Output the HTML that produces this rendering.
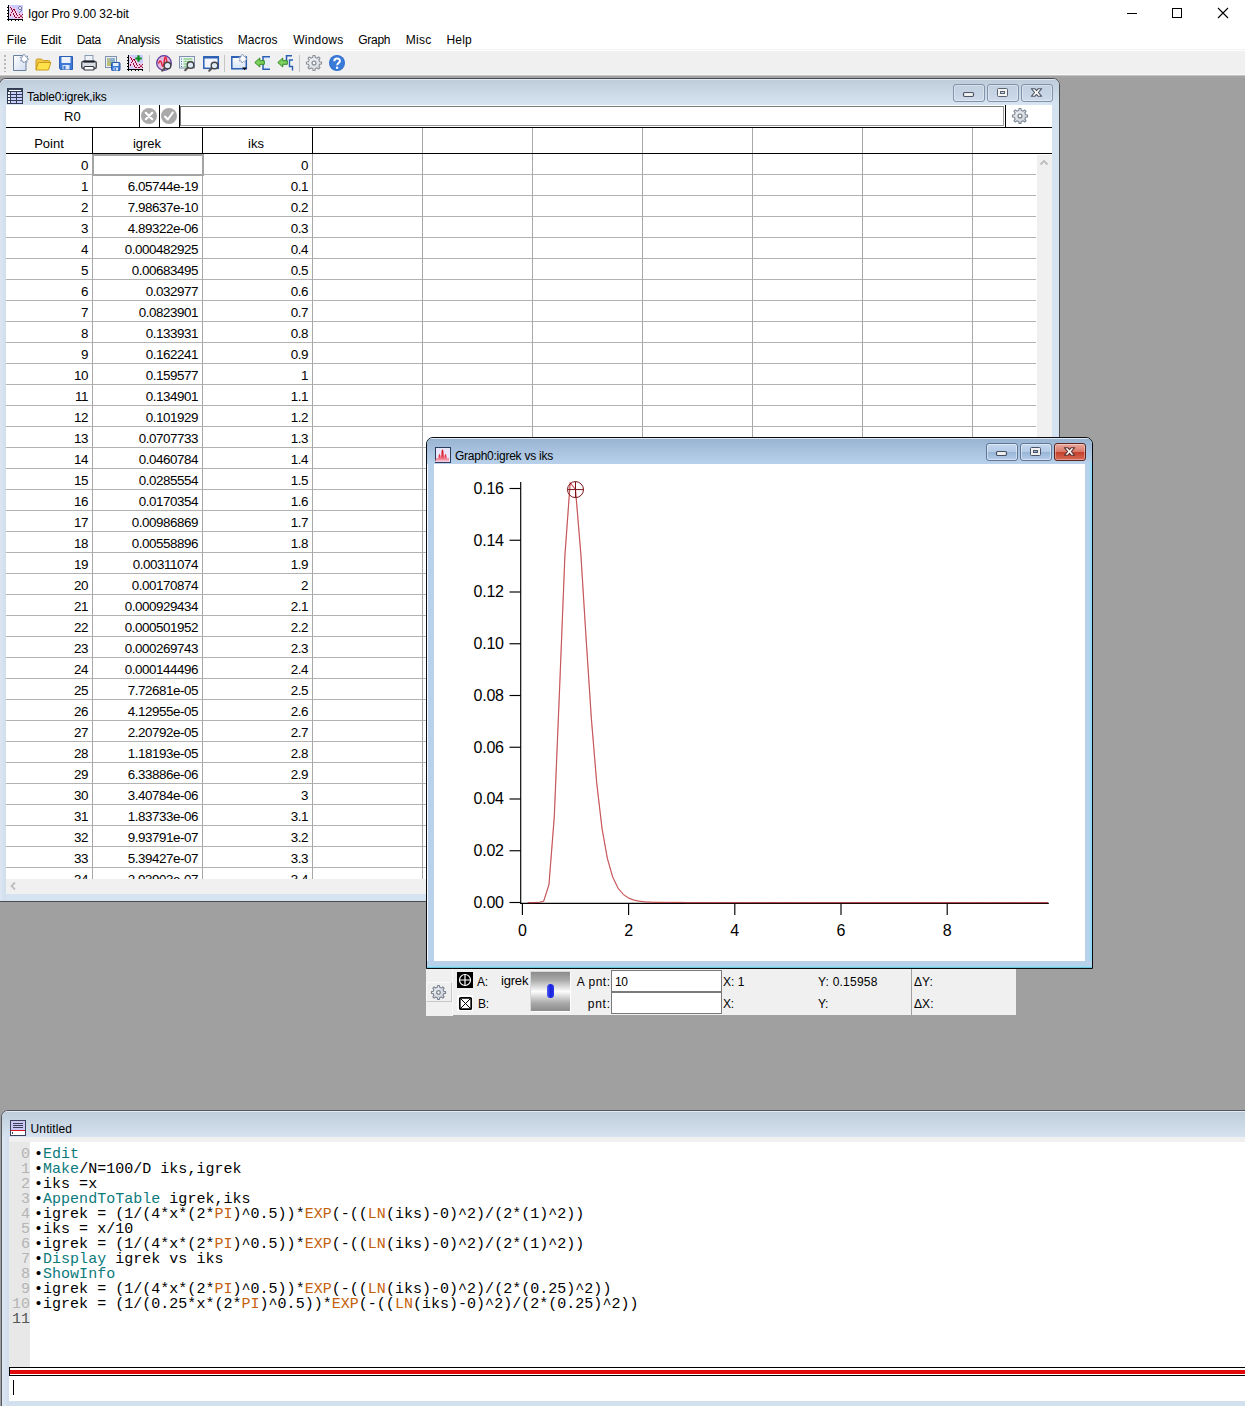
<!DOCTYPE html>
<html><head><meta charset="utf-8"><title>Igor Pro 9.00 32-bit</title>
<style>
*{box-sizing:border-box;margin:0;padding:0}
html,body{width:1245px;height:1406px;overflow:hidden}
body{position:relative;background:#a0a0a0;font-family:"Liberation Sans",sans-serif;color:#000}
.abs{position:absolute}
.t{position:absolute;white-space:nowrap;line-height:1}
.ui{font-size:12px}
svg{position:absolute;overflow:visible}
.mono{font-family:"Liberation Mono",monospace}

.c0,.c1{font-size:13.400px;text-align:right;letter-spacing:-0.44px}
.ip{font-size:12px;letter-spacing:-0.3px}
.ln,.cl{font-size:15px}
.mn{letter-spacing:-0.35px}
</style></head><body>

<div class="abs" style="left:0;top:0;width:1245px;height:51px;background:#fff"></div>
<div class="abs" style="left:0;top:49px;width:1245px;height:1px;background:#f2f2f2"></div>
<div class="abs" style="left:0;top:51px;width:1245px;height:24px;background:#f0f0f0"></div>
<div class="abs" style="left:0;top:74px;width:1245px;height:1px;background:#f8f8f8"></div>
<div class="abs" style="left:0;top:75px;width:1245px;height:3px;background:linear-gradient(#c4c4c4 0,#c4c4c4 1px,#a3a3a3 1px)"></div>
<svg style="left:7px;top:5px" width="16" height="16" ><g shape-rendering="crispEdges"><rect x="2" y="0" width="14" height="14" fill="#ccccff"/><rect x="2" y="1" width="3" height="3" fill="#ffcce8" opacity=".55"/><rect x="3" y="2" width="3" height="3" fill="#ffcce8" opacity=".55"/><rect x="3" y="3" width="3" height="3" fill="#ffcce8" opacity=".55"/><rect x="4" y="4" width="3" height="3" fill="#ffcce8" opacity=".55"/><rect x="4" y="5" width="3" height="3" fill="#ffcce8" opacity=".55"/><rect x="3" y="6" width="3" height="3" fill="#ffcce8" opacity=".55"/><rect x="2" y="8" width="3" height="3" fill="#ffcce8" opacity=".55"/><rect x="2" y="9" width="3" height="3" fill="#ffcce8" opacity=".55"/><rect x="5" y="3" width="3" height="3" fill="#ffcce8" opacity=".55"/><rect x="6" y="3" width="3" height="3" fill="#ffcce8" opacity=".55"/><rect x="6" y="4" width="3" height="3" fill="#ffcce8" opacity=".55"/><rect x="7" y="5" width="3" height="3" fill="#ffcce8" opacity=".55"/><rect x="7" y="6" width="3" height="3" fill="#ffcce8" opacity=".55"/><rect x="8" y="7" width="3" height="3" fill="#ffcce8" opacity=".55"/><rect x="8" y="8" width="3" height="3" fill="#ffcce8" opacity=".55"/><rect x="5" y="7" width="3" height="3" fill="#ffcce8" opacity=".55"/><rect x="5" y="8" width="3" height="3" fill="#ffcce8" opacity=".55"/><rect x="6" y="9" width="3" height="3" fill="#ffcce8" opacity=".55"/><rect x="6" y="10" width="3" height="3" fill="#ffcce8" opacity=".55"/><rect x="7" y="11" width="3" height="3" fill="#ffcce8" opacity=".55"/><rect x="8" y="11" width="3" height="3" fill="#ffcce8" opacity=".55"/><rect x="9" y="9" width="3" height="3" fill="#ffcce8" opacity=".55"/><rect x="10" y="11" width="3" height="3" fill="#ffcce8" opacity=".55"/><rect x="11" y="11" width="3" height="3" fill="#ffcce8" opacity=".55"/><rect x="11" y="8" width="3" height="3" fill="#ffcce8" opacity=".55"/><rect x="14" y="8" width="2" height="3" fill="#ffcce8" opacity=".55"/><rect x="14" y="11" width="2" height="3" fill="#ffcce8" opacity=".55"/><rect x="12" y="10" width="3" height="3" fill="#ffcce8" opacity=".55"/><rect x="13" y="10" width="3" height="3" fill="#ffcce8" opacity=".55"/><rect x="3" y="2" width="1" height="1" fill="#8c0a36"/><rect x="4" y="3" width="1" height="1" fill="#8c0a36"/><rect x="4" y="4" width="1" height="1" fill="#8c0a36"/><rect x="5" y="5" width="1" height="1" fill="#8c0a36"/><rect x="5" y="6" width="1" height="1" fill="#8c0a36"/><rect x="4" y="7" width="1" height="1" fill="#8c0a36"/><rect x="3" y="9" width="1" height="1" fill="#8c0a36"/><rect x="3" y="10" width="1" height="1" fill="#8c0a36"/><rect x="6" y="4" width="1" height="1" fill="#8c0a36"/><rect x="7" y="4" width="1" height="1" fill="#8c0a36"/><rect x="7" y="5" width="1" height="1" fill="#8c0a36"/><rect x="8" y="6" width="1" height="1" fill="#8c0a36"/><rect x="8" y="7" width="1" height="1" fill="#8c0a36"/><rect x="9" y="8" width="1" height="1" fill="#8c0a36"/><rect x="9" y="9" width="1" height="1" fill="#8c0a36"/><rect x="6" y="8" width="1" height="1" fill="#8c0a36"/><rect x="6" y="9" width="1" height="1" fill="#8c0a36"/><rect x="7" y="10" width="1" height="1" fill="#8c0a36"/><rect x="7" y="11" width="1" height="1" fill="#8c0a36"/><rect x="8" y="12" width="1" height="1" fill="#8c0a36"/><rect x="9" y="12" width="1" height="1" fill="#8c0a36"/><rect x="10" y="10" width="1" height="1" fill="#8c0a36"/><rect x="11" y="12" width="1" height="1" fill="#8c0a36"/><rect x="12" y="12" width="1" height="1" fill="#8c0a36"/><rect x="12" y="9" width="1" height="1" fill="#8c0a36"/><rect x="15" y="9" width="1" height="1" fill="#8c0a36"/><rect x="15" y="12" width="1" height="1" fill="#8c0a36"/><rect x="13" y="10.400" width="2" height="1.400" fill="#98001c" shape-rendering="auto"/><rect x="12" y="2" width="2" height="2" fill="#e4e4fa"/><rect x="12" y="1" width="1" height="1" fill="#7c7ea2"/><rect x="13" y="1" width="1" height="1" fill="#7c7ea2"/><rect x="11" y="2" width="1" height="1" fill="#7c7ea2"/><rect x="11" y="3" width="1" height="1" fill="#7c7ea2"/><rect x="14" y="2" width="1" height="1" fill="#7c7ea2"/><rect x="14" y="3" width="1" height="1" fill="#7c7ea2"/><rect x="14" y="4" width="1" height="1" fill="#7c7ea2"/><rect x="14" y="5" width="1" height="1" fill="#7c7ea2"/><rect x="12" y="4" width="1" height="1" fill="#7c7ea2"/><rect x="13" y="4" width="1" height="1" fill="#7c7ea2"/><rect x="13" y="6" width="1" height="1" fill="#7c7ea2"/><rect x="12" y="7" width="1" height="1" fill="#7c7ea2"/><rect x="1" y="0" width="1" height="16" fill="#000"/><rect x="1" y="14" width="15" height="1" fill="#000"/><rect x="0" y="2" width="1" height="1" fill="#000"/><rect x="0" y="5" width="1" height="1" fill="#000"/><rect x="0" y="8" width="1" height="1" fill="#000"/><rect x="0" y="11" width="1" height="1" fill="#000"/><rect x="0" y="14" width="1" height="1" fill="#000"/><rect x="1" y="15" width="1" height="1" fill="#000"/><rect x="4" y="15" width="1" height="1" fill="#000"/><rect x="8" y="15" width="1" height="1" fill="#000"/><rect x="11" y="15" width="1" height="1" fill="#000"/><rect x="15" y="15" width="1" height="1" fill="#000"/></g></svg>
<div class="t" id="ttl" style="left:28px;top:8px;font-size:12px;letter-spacing:-0.1px">Igor Pro 9.00 32-bit</div>
<svg style="left:1120px;top:0" width="125" height="30" shape-rendering="crispEdges"><path d="M7 13.5h10" stroke="#000" fill="none"/><rect x="52.5" y="8.5" width="9" height="9" stroke="#000" fill="none"/><path d="M98 8l10 10M108 8l-10 10" stroke="#000" fill="none" shape-rendering="auto" stroke-width="1.1"/></svg>
<div class="t" id="mn0" style="left:6.8px;top:34px;font-size:12px;letter-spacing:0.1px">File</div>
<div class="t" id="mn1" style="left:40.8px;top:34px;font-size:12px;letter-spacing:-0.05px">Edit</div>
<div class="t" id="mn2" style="left:76.8px;top:34px;font-size:12px;letter-spacing:-0.35px">Data</div>
<div class="t" id="mn3" style="left:117.3px;top:34px;font-size:12px;letter-spacing:-0.3px">Analysis</div>
<div class="t" id="mn4" style="left:175.5px;top:34px;font-size:12px;letter-spacing:-0.05px">Statistics</div>
<div class="t" id="mn5" style="left:237.7px;top:34px;font-size:12px;letter-spacing:0.1px">Macros</div>
<div class="t" id="mn6" style="left:293.3px;top:34px;font-size:12px;letter-spacing:0.2px">Windows</div>
<div class="t" id="mn7" style="left:358.3px;top:34px;font-size:12px;letter-spacing:-0.3px">Graph</div>
<div class="t" id="mn8" style="left:405.8px;top:34px;font-size:12px;letter-spacing:0.3px">Misc</div>
<div class="t" id="mn9" style="left:446.5px;top:34px;font-size:12px;letter-spacing:0.15px">Help</div>
<div class="abs" style="left:4px;top:55px;width:2px;height:17px;background:repeating-linear-gradient(180deg,#b8b8b8 0,#b8b8b8 2px,transparent 2px,transparent 4px)"></div>
<svg style="left:13px;top:55px" width="16" height="16" ><path d="M.5.500h9.500l3 3v12h-12.500z" fill="url(#pg)" stroke="#6a7f9c"/><defs><linearGradient id="pg" x1="0" y1="0" x2="1" y2="1"><stop offset="0" stop-color="#fff"/><stop offset="1" stop-color="#cfdcf0"/></linearGradient></defs><path d="M11.500 -.500l1 2 2.200-.5-.8 2 1.800 1.300-2 .9.300 2.200-2-1-1.500 1.600-.8-2.100-2.200.100 1.200-1.900-1.400-1.700 2.200-.300.300-2.200z" fill="#fff" stroke="#7c8fae" stroke-width=".9"/></svg>
<svg style="left:35px;top:55px" width="16" height="16" ><path d="M1 15V5.500q0-1.500 1.500-1.500h4l1.500 1.500h5.500q1.500 0 1.500 1.500v1" fill="#f2c84a" stroke="#c9991e"/><path d="M1 15l2.300-7.500h12.500l-2.300 7.500z" fill="#ffe14a" stroke="#c9991e" stroke-linejoin="round"/></svg>
<svg style="left:58px;top:55px" width="16" height="16" ><path d="M1.500 1.500h13v13h-12l-1-1z" fill="#3b78d8" stroke="#2d5fb3" stroke-linejoin="round"/><rect x="3.500" y="2" width="9" height="6" fill="#eef3fb"/><rect x="4.500" y="10" width="7" height="4.500" fill="#dbe6f6"/><rect x="5.500" y="11" width="2" height="3.500" fill="#3b78d8"/></svg>
<svg style="left:81px;top:55px" width="16" height="16" ><rect x="4" y=".5" width="8" height="6" fill="#eef3fa" stroke="#8a9bb4"/><rect x=".7" y="6.500" width="14.600" height="7" rx="1.500" fill="#d9dde4" stroke="#4b4f58" stroke-width="1.400"/><rect x="2.500" y="5.500" width="11" height="2" fill="#1b1d22"/><rect x="3" y="11.500" width="10" height="3.500" rx="1" fill="#fff" stroke="#33363d" stroke-width="1.200"/></svg>
<svg style="left:105px;top:55px" width="16" height="16" ><rect x=".5" y="1.500" width="11" height="11" fill="#e9eef6" stroke="#7e92b0"/><rect x="2" y="3" width="8" height="8" fill="#8fb0c9"/><rect x="2" y="7" width="8" height="4" fill="#9fb86a"/><rect x="2" y="3" width="3" height="8" fill="#c9c27a" opacity=".7"/><rect x="6.500" y="7.500" width="8.500" height="8" rx="1" fill="#3b78d8" stroke="#2a57a8"/><rect x="8" y="8" width="5.500" height="3" fill="#e6eefa"/><rect x="8.500" y="12.500" width="4.500" height="3" fill="#dbe6f6"/><rect x="9.500" y="13" width="1.500" height="2.500" fill="#3b78d8"/></svg>
<svg style="left:127px;top:55px" width="16" height="16" ><g shape-rendering="crispEdges"><rect x="2" y="0" width="14" height="14" fill="#ccccff"/><rect x="2" y="1" width="3" height="3" fill="#ffcce8" opacity=".55"/><rect x="3" y="2" width="3" height="3" fill="#ffcce8" opacity=".55"/><rect x="3" y="3" width="3" height="3" fill="#ffcce8" opacity=".55"/><rect x="4" y="4" width="3" height="3" fill="#ffcce8" opacity=".55"/><rect x="4" y="5" width="3" height="3" fill="#ffcce8" opacity=".55"/><rect x="3" y="6" width="3" height="3" fill="#ffcce8" opacity=".55"/><rect x="2" y="8" width="3" height="3" fill="#ffcce8" opacity=".55"/><rect x="2" y="9" width="3" height="3" fill="#ffcce8" opacity=".55"/><rect x="5" y="3" width="3" height="3" fill="#ffcce8" opacity=".55"/><rect x="6" y="3" width="3" height="3" fill="#ffcce8" opacity=".55"/><rect x="6" y="4" width="3" height="3" fill="#ffcce8" opacity=".55"/><rect x="7" y="5" width="3" height="3" fill="#ffcce8" opacity=".55"/><rect x="7" y="6" width="3" height="3" fill="#ffcce8" opacity=".55"/><rect x="8" y="7" width="3" height="3" fill="#ffcce8" opacity=".55"/><rect x="8" y="8" width="3" height="3" fill="#ffcce8" opacity=".55"/><rect x="5" y="7" width="3" height="3" fill="#ffcce8" opacity=".55"/><rect x="5" y="8" width="3" height="3" fill="#ffcce8" opacity=".55"/><rect x="6" y="9" width="3" height="3" fill="#ffcce8" opacity=".55"/><rect x="6" y="10" width="3" height="3" fill="#ffcce8" opacity=".55"/><rect x="7" y="11" width="3" height="3" fill="#ffcce8" opacity=".55"/><rect x="8" y="11" width="3" height="3" fill="#ffcce8" opacity=".55"/><rect x="9" y="9" width="3" height="3" fill="#ffcce8" opacity=".55"/><rect x="10" y="11" width="3" height="3" fill="#ffcce8" opacity=".55"/><rect x="11" y="11" width="3" height="3" fill="#ffcce8" opacity=".55"/><rect x="11" y="8" width="3" height="3" fill="#ffcce8" opacity=".55"/><rect x="14" y="8" width="2" height="3" fill="#ffcce8" opacity=".55"/><rect x="14" y="11" width="2" height="3" fill="#ffcce8" opacity=".55"/><rect x="12" y="10" width="3" height="3" fill="#ffcce8" opacity=".55"/><rect x="13" y="10" width="3" height="3" fill="#ffcce8" opacity=".55"/><rect x="3" y="2" width="1" height="1" fill="#8c0a36"/><rect x="4" y="3" width="1" height="1" fill="#8c0a36"/><rect x="4" y="4" width="1" height="1" fill="#8c0a36"/><rect x="5" y="5" width="1" height="1" fill="#8c0a36"/><rect x="5" y="6" width="1" height="1" fill="#8c0a36"/><rect x="4" y="7" width="1" height="1" fill="#8c0a36"/><rect x="3" y="9" width="1" height="1" fill="#8c0a36"/><rect x="3" y="10" width="1" height="1" fill="#8c0a36"/><rect x="6" y="4" width="1" height="1" fill="#8c0a36"/><rect x="7" y="4" width="1" height="1" fill="#8c0a36"/><rect x="7" y="5" width="1" height="1" fill="#8c0a36"/><rect x="8" y="6" width="1" height="1" fill="#8c0a36"/><rect x="8" y="7" width="1" height="1" fill="#8c0a36"/><rect x="9" y="8" width="1" height="1" fill="#8c0a36"/><rect x="9" y="9" width="1" height="1" fill="#8c0a36"/><rect x="6" y="8" width="1" height="1" fill="#8c0a36"/><rect x="6" y="9" width="1" height="1" fill="#8c0a36"/><rect x="7" y="10" width="1" height="1" fill="#8c0a36"/><rect x="7" y="11" width="1" height="1" fill="#8c0a36"/><rect x="8" y="12" width="1" height="1" fill="#8c0a36"/><rect x="9" y="12" width="1" height="1" fill="#8c0a36"/><rect x="10" y="10" width="1" height="1" fill="#8c0a36"/><rect x="11" y="12" width="1" height="1" fill="#8c0a36"/><rect x="12" y="12" width="1" height="1" fill="#8c0a36"/><rect x="12" y="9" width="1" height="1" fill="#8c0a36"/><rect x="15" y="9" width="1" height="1" fill="#8c0a36"/><rect x="15" y="12" width="1" height="1" fill="#8c0a36"/><rect x="13" y="10.400" width="2" height="1.400" fill="#98001c" shape-rendering="auto"/><rect x="1" y="0" width="1" height="16" fill="#000"/><rect x="1" y="14" width="15" height="1" fill="#000"/><rect x="0" y="2" width="1" height="1" fill="#000"/><rect x="0" y="5" width="1" height="1" fill="#000"/><rect x="0" y="8" width="1" height="1" fill="#000"/><rect x="0" y="11" width="1" height="1" fill="#000"/><rect x="0" y="14" width="1" height="1" fill="#000"/><rect x="1" y="15" width="1" height="1" fill="#000"/><rect x="4" y="15" width="1" height="1" fill="#000"/><rect x="8" y="15" width="1" height="1" fill="#000"/><rect x="11" y="15" width="1" height="1" fill="#000"/><rect x="15" y="15" width="1" height="1" fill="#000"/></g><path d="M11.500 0v7M8 3.500h7" stroke="#ccccff" stroke-width="3.600"/><path d="M11.500 0.300v6.400M8.300 3.500h6.400" stroke="#0a8a1c" stroke-width="2.200"/></svg>
<div class="abs" style="left:149px;top:55px;width:1px;height:17px;background:#c6c6c6"></div>
<svg style="left:156px;top:55px" width="16" height="16" ><circle cx="8" cy="8" r="7.300" fill="#e6b8dc" stroke="#5b3aa0" stroke-width="1.300"/><path d="M2.500 8.500c1-3.500 2.500-3.500 3.200 0s1.800 4 2.300 0 .5-6.500 1.500-6.500 1 4 1.500 6.500" stroke="#e0243c" stroke-width="1.500" fill="none"/><path d="M9.2 12.8l-3 3" stroke="#555" stroke-width="2" stroke-linecap="round"/><circle cx="11.5" cy="10.5" r="3.3" fill="#dfeaf6" stroke="#444" stroke-width="1.400"/></svg>
<svg style="left:179px;top:55px" width="16" height="16" ><rect x=".5" y="1.500" width="15" height="11.500" fill="#eef4fb" stroke="#7e92b0"/><path d="M4.500 4h9M4.500 6.500h9M4.500 9h5M4.500 11.500h4" stroke="#8fd08a" stroke-width="1.400"/><path d="M2 4h1M2 6.500h1M2 9h1M2 11.500h1" stroke="#4c6a8c" stroke-width="1.200"/><path d="M9.2 12.3l-3 3" stroke="#555" stroke-width="2" stroke-linecap="round"/><circle cx="11.5" cy="10" r="3.3" fill="#dfeaf6" stroke="#444" stroke-width="1.400"/></svg>
<svg style="left:203px;top:55px" width="16" height="16" ><rect x=".8" y="1.800" width="14.500" height="11.500" fill="#f2f6fc" stroke="#2b5fb4" stroke-width="1.500"/><rect x=".8" y="1.500" width="14.500" height="2" fill="#2b5fb4"/><path d="M9.2 12.8l-3 3" stroke="#555" stroke-width="2" stroke-linecap="round"/><circle cx="11.5" cy="10.5" r="3.3" fill="#dfeaf6" stroke="#444" stroke-width="1.400"/></svg>
<div class="abs" style="left:224px;top:55px;width:1px;height:17px;background:#c6c6c6"></div>
<svg style="left:231px;top:55px" width="16" height="16" ><rect x=".8" y="1.800" width="14.500" height="12" fill="url(#pg2)" stroke="#2b5fb4" stroke-width="1.500"/><rect x=".8" y="1.500" width="14.500" height="1.500" fill="#2b5fb4"/><defs><linearGradient id="pg2" x1="0" y1="0" x2="0" y2="1"><stop offset="0" stop-color="#fff"/><stop offset="1" stop-color="#d6e2f4"/></linearGradient></defs><path d="M12 -.5l1 2 2.200-.5-.8 2 1.800 1.300-2 .9.300 2.200-2-1-1.500 1.600-.8-2.100-2.200.100 1.200-1.900-1.400-1.700 2.200-.300.300-2.200z" fill="#fff" stroke="#8c9cb8" stroke-width=".9"/><path d="M11 12.500h5l-2.500 2.500z" fill="#000"/></svg>
<svg style="left:254px;top:55px" width="16" height="16" ><rect x="9" y="2" width="7" height="12" fill="#e4ecf8"/><path d="M16 1.800h-7v12.500h7" fill="none" stroke="#2b5fb4" stroke-width="1.500"/><path d="M.8 7.500l5-4.500v2.700h4.500v3.600h-4.500v2.700z" fill="#7fd05c" stroke="#2f8a24" stroke-linejoin="round"/></svg>
<svg style="left:277px;top:55px" width="16" height="16" ><path d="M15 .8h-5.500v6.500" fill="none" stroke="#2b5fb4" stroke-width="1.500"/><path d="M16 5h-3.500v6.500h3v4" fill="none" stroke="#2b5fb4" stroke-width="1.400"/><path d="M.8 7.500l5-4.500v2.700h4.500v3.600h-4.500v2.700z" fill="#7fd05c" stroke="#2f8a24" stroke-linejoin="round"/></svg>
<div class="abs" style="left:299px;top:55px;width:1px;height:17px;background:#c6c6c6"></div>
<svg style="left:306px;top:55px" width="16" height="16"><defs><linearGradient id="gg306_55" x1="0" y1="0" x2="1" y2="1"><stop offset="0" stop-color="#f4f6f9"/><stop offset="1" stop-color="#d4d7dc"/></linearGradient></defs><path d="M13.65 6.78L15.53 6.99L15.53 9.01L13.65 9.22L12.85 11.13L14.04 12.61L12.61 14.04L11.13 12.85L9.22 13.65L9.01 15.53L6.99 15.53L6.78 13.65L4.87 12.85L3.39 14.04L1.96 12.61L3.15 11.13L2.35 9.22L0.47 9.01L0.47 6.99L2.35 6.78L3.15 4.87L1.96 3.39L3.39 1.96L4.87 3.15L6.78 2.35L6.99 0.47L9.01 0.47L9.22 2.35L11.13 3.15L12.61 1.96L14.04 3.39L12.85 4.87Z" fill="url(#gg306_55)" stroke="#8a8f98" stroke-width="1.100" stroke-linejoin="round"/><circle cx="8.0" cy="8.0" r="1.92" fill="#fff" stroke="#8a8f98" stroke-width="1.300"/></svg>
<svg style="left:329px;top:55px" width="16" height="16" ><circle cx="8" cy="8" r="8" fill="#2e6fd0"/><circle cx="8" cy="8" r="7" fill="#3a7ad8"/><path d="M5.300 6.200c0-3.600 5.600-3.600 5.600-.3 0 2-2.700 2.200-2.700 4.300" stroke="#fff" stroke-width="2" fill="none"/><circle cx="8.100" cy="12.700" r="1.200" fill="#fff"/></svg>
<div class="abs" style="left:-1px;top:78px;width:1061px;height:824px;border:1px solid #4a4c50;border-radius:7px 7px 0 0;background:#d5e2f0;overflow:hidden">
<div class="abs" style="left:0;top:0;width:1059px;height:26px;background:linear-gradient(#e4eaf4 0,#e4eaf4 1px,#bfcddb 1px,#d7e4f2 100%)"></div>
<div class="abs" style="left:0;top:26px;width:6px;height:800px;background:linear-gradient(90deg,#dde7f3,#d0ddec)"></div>
</div>
<div class="abs" style="left:6px;top:105px;width:1046px;height:789px;background:#fff"></div>
<svg style="left:7px;top:88px" width="16" height="16" shape-rendering="crispEdges"><rect x="0" y="0" width="16" height="16" fill="#2f3b52"/><rect x="1" y="1" width="14" height="2" fill="#3b4660"/><rect x="2" y="2" width="12" height="1" fill="#fff"/>
<rect x="1" y="4" width="2" height="2" fill="#f4f4ff"/><rect x="4" y="4" width="5" height="2" fill="#c9cdfb"/><rect x="10" y="4" width="5" height="2" fill="#c9cdfb"/>
<rect x="1" y="7" width="2" height="2" fill="#f4f4ff"/><rect x="4" y="7" width="5" height="2" fill="#c9cdfb"/><rect x="10" y="7" width="5" height="2" fill="#c9cdfb"/>
<rect x="1" y="10" width="2" height="2" fill="#f4f4ff"/><rect x="4" y="10" width="5" height="2" fill="#c9cdfb"/><rect x="10" y="10" width="5" height="2" fill="#c9cdfb"/>
<rect x="1" y="13" width="2" height="2" fill="#f4f4ff"/><rect x="4" y="13" width="5" height="2" fill="#c9cdfb"/><rect x="10" y="13" width="5" height="2" fill="#c9cdfb"/>
</svg>
<div class="t" id="tt_table" style="left:27px;top:91px;font-size:12px;letter-spacing:-0.2px">Table0:igrek,iks</div>
<div class="abs" style="left:953px;top:84px;width:32px;height:18px;border:1px solid #8292aa;border-radius:3px;background:linear-gradient(#c3d0e0,#c6d3e4 50%,#cfdbea);box-shadow:inset 0 0 0 1px rgba(255,255,255,.35)"></div>
<div class="abs" style="left:987px;top:84px;width:32px;height:18px;border:1px solid #8292aa;border-radius:3px;background:linear-gradient(#c3d0e0,#c6d3e4 50%,#cfdbea);box-shadow:inset 0 0 0 1px rgba(255,255,255,.35)"></div>
<div class="abs" style="left:1021px;top:84px;width:32px;height:18px;border:1px solid #8292aa;border-radius:3px;background:linear-gradient(#c3d0e0,#c6d3e4 50%,#cfdbea);box-shadow:inset 0 0 0 1px rgba(255,255,255,.35)"></div>
<svg style="left:953px;top:84px" width="100" height="18"><rect x="10.500" y="8.500" width="10" height="4" rx="1.200" fill="#f0f0f0" stroke="#4d5463" stroke-width="1.200"/><rect x="44.500" y="4.500" width="10" height="8" rx="1" fill="#f4f4f4" stroke="#5a6270"/><rect x="47.5" y="7.500" width="4" height="2" fill="#c8d2e0" stroke="#5a6270"/><path transform="translate(83.500 8.500)" d="M-5.200 -3.800L-1.700 -3.800L0 -1.900L1.700 -3.800L5.200 -3.800L1.900 0L5.200 3.800L1.700 3.800L0 1.900L-1.700 3.800L-5.200 3.800L-1.900 0Z" fill="#fbfbfb" stroke="#4d5463" stroke-width="1.100" stroke-linejoin="round"/></svg>
<div class="t" id="r0" style="left:64px;top:110px;font-size:13px">R0</div>
<div class="abs" style="left:139px;top:105px;width:1px;height:22px;background:#000"></div>
<div class="abs" style="left:159px;top:105px;width:1px;height:22px;background:#000"></div>
<div class="abs" style="left:179px;top:105px;width:1px;height:22px;background:#000"></div>
<div class="abs" style="left:1005px;top:105px;width:1px;height:22px;background:#000"></div>
<svg style="left:141px;top:108px" width="16" height="16"><circle cx="8" cy="8" r="8" fill="#a9a9a9"/><path d="M4.800 4.800l6.400 6.400M11.200 4.800l-6.400 6.400" stroke="#fff" stroke-width="2.200" stroke-linecap="round"/></svg>
<svg style="left:161px;top:108px" width="16" height="16"><circle cx="8" cy="8" r="8" fill="#a9a9a9"/><path d="M4 8.500l2.800 3 5-7" stroke="#fff" stroke-width="2" fill="none" stroke-linecap="round" stroke-linejoin="round"/></svg>
<div class="abs" style="left:180px;top:106px;width:824px;height:20px;border:1px solid #7a7a7a;border-right-color:#9a9a9a;border-bottom-color:#9a9a9a;background:#fff"></div>
<svg style="left:1012px;top:108px" width="16" height="16"><defs><linearGradient id="gg1012_108" x1="0" y1="0" x2="1" y2="1"><stop offset="0" stop-color="#f4f6f9"/><stop offset="1" stop-color="#c6ccd6"/></linearGradient></defs><path d="M13.65 6.78L15.53 6.99L15.53 9.01L13.65 9.22L12.85 11.13L14.04 12.61L12.61 14.04L11.13 12.85L9.22 13.65L9.01 15.53L6.99 15.53L6.78 13.65L4.87 12.85L3.39 14.04L1.96 12.61L3.15 11.13L2.35 9.22L0.47 9.01L0.47 6.99L2.35 6.78L3.15 4.87L1.96 3.39L3.39 1.96L4.87 3.15L6.78 2.35L6.99 0.47L9.01 0.47L9.22 2.35L11.13 3.15L12.61 1.96L14.04 3.39L12.85 4.87Z" fill="url(#gg1012_108)" stroke="#7d8593" stroke-width="1.100" stroke-linejoin="round"/><circle cx="8.0" cy="8.0" r="1.92" fill="#fff" stroke="#7d8593" stroke-width="1.300"/></svg>
<div class="abs" style="left:6px;top:127px;width:1046px;height:1px;background:#000"></div>
<div class="abs" style="left:6px;top:153px;width:1046px;height:1px;background:#000"></div>
<div class="abs" style="left:92px;top:128px;width:1px;height:25px;background:#000"></div>
<div class="abs" style="left:202px;top:128px;width:1px;height:25px;background:#000"></div>
<div class="abs" style="left:312px;top:128px;width:1px;height:25px;background:#000"></div>
<div class="abs" style="left:422px;top:128px;width:1px;height:25px;background:#a8a8a8"></div>
<div class="abs" style="left:532px;top:128px;width:1px;height:25px;background:#a8a8a8"></div>
<div class="abs" style="left:642px;top:128px;width:1px;height:25px;background:#a8a8a8"></div>
<div class="abs" style="left:752px;top:128px;width:1px;height:25px;background:#a8a8a8"></div>
<div class="abs" style="left:862px;top:128px;width:1px;height:25px;background:#a8a8a8"></div>
<div class="abs" style="left:972px;top:128px;width:1px;height:25px;background:#a8a8a8"></div>
<div class="t hd" id="h_point" style="left:6px;width:86px;top:136.500px;text-align:center;font-size:13px">Point</div>
<div class="t hd" id="h_igrek" style="left:92px;width:110px;top:136.500px;text-align:center;font-size:13px">igrek</div>
<div class="t hd" id="h_iks" style="left:201px;width:110px;top:136.500px;text-align:center;font-size:13px">iks</div>
<div class="abs" style="left:6px;top:154px;width:1031px;height:725px;overflow:hidden;background:#fff">
<div class="abs" style="left:0;top:0;width:1030px;height:725px;background:repeating-linear-gradient(180deg,transparent 0,transparent 20px,#b2b2b2 20px,#b2b2b2 21px)"></div>
<div class="abs" style="left:86px;top:0;width:1px;height:725px;background:#a8a8a8"></div>
<div class="abs" style="left:196px;top:0;width:1px;height:725px;background:#a8a8a8"></div>
<div class="abs" style="left:306px;top:0;width:1px;height:725px;background:#a8a8a8"></div>
<div class="abs" style="left:416px;top:0;width:1px;height:725px;background:#a8a8a8"></div>
<div class="abs" style="left:526px;top:0;width:1px;height:725px;background:#a8a8a8"></div>
<div class="abs" style="left:636px;top:0;width:1px;height:725px;background:#a8a8a8"></div>
<div class="abs" style="left:746px;top:0;width:1px;height:725px;background:#a8a8a8"></div>
<div class="abs" style="left:856px;top:0;width:1px;height:725px;background:#a8a8a8"></div>
<div class="abs" style="left:966px;top:0;width:1px;height:725px;background:#a8a8a8"></div>
<div class="t c0" style="left:0;width:82px;top:4.5px">0</div>
<div class="t c1" style="left:196px;width:106px;top:4.5px">0</div>
<div class="t c0" style="left:0;width:82px;top:25.5px">1</div>
<div class="t c1" style="left:86px;width:106px;top:25.5px">6.05744e-19</div>
<div class="t c1" style="left:196px;width:106px;top:25.5px">0.1</div>
<div class="t c0" style="left:0;width:82px;top:46.5px">2</div>
<div class="t c1" style="left:86px;width:106px;top:46.5px">7.98637e-10</div>
<div class="t c1" style="left:196px;width:106px;top:46.5px">0.2</div>
<div class="t c0" style="left:0;width:82px;top:67.5px">3</div>
<div class="t c1" style="left:86px;width:106px;top:67.5px">4.89322e-06</div>
<div class="t c1" style="left:196px;width:106px;top:67.5px">0.3</div>
<div class="t c0" style="left:0;width:82px;top:88.5px">4</div>
<div class="t c1" style="left:86px;width:106px;top:88.5px">0.000482925</div>
<div class="t c1" style="left:196px;width:106px;top:88.5px">0.4</div>
<div class="t c0" style="left:0;width:82px;top:109.5px">5</div>
<div class="t c1" style="left:86px;width:106px;top:109.5px">0.00683495</div>
<div class="t c1" style="left:196px;width:106px;top:109.5px">0.5</div>
<div class="t c0" style="left:0;width:82px;top:130.5px">6</div>
<div class="t c1" style="left:86px;width:106px;top:130.5px">0.032977</div>
<div class="t c1" style="left:196px;width:106px;top:130.5px">0.6</div>
<div class="t c0" style="left:0;width:82px;top:151.5px">7</div>
<div class="t c1" style="left:86px;width:106px;top:151.5px">0.0823901</div>
<div class="t c1" style="left:196px;width:106px;top:151.5px">0.7</div>
<div class="t c0" style="left:0;width:82px;top:172.5px">8</div>
<div class="t c1" style="left:86px;width:106px;top:172.5px">0.133931</div>
<div class="t c1" style="left:196px;width:106px;top:172.5px">0.8</div>
<div class="t c0" style="left:0;width:82px;top:193.5px">9</div>
<div class="t c1" style="left:86px;width:106px;top:193.5px">0.162241</div>
<div class="t c1" style="left:196px;width:106px;top:193.5px">0.9</div>
<div class="t c0" style="left:0;width:82px;top:214.5px">10</div>
<div class="t c1" style="left:86px;width:106px;top:214.5px">0.159577</div>
<div class="t c1" style="left:196px;width:106px;top:214.5px">1</div>
<div class="t c0" style="left:0;width:82px;top:235.5px">11</div>
<div class="t c1" style="left:86px;width:106px;top:235.5px">0.134901</div>
<div class="t c1" style="left:196px;width:106px;top:235.5px">1.1</div>
<div class="t c0" style="left:0;width:82px;top:256.5px">12</div>
<div class="t c1" style="left:86px;width:106px;top:256.5px">0.101929</div>
<div class="t c1" style="left:196px;width:106px;top:256.5px">1.2</div>
<div class="t c0" style="left:0;width:82px;top:277.5px">13</div>
<div class="t c1" style="left:86px;width:106px;top:277.5px">0.0707733</div>
<div class="t c1" style="left:196px;width:106px;top:277.5px">1.3</div>
<div class="t c0" style="left:0;width:82px;top:298.5px">14</div>
<div class="t c1" style="left:86px;width:106px;top:298.5px">0.0460784</div>
<div class="t c1" style="left:196px;width:106px;top:298.5px">1.4</div>
<div class="t c0" style="left:0;width:82px;top:319.5px">15</div>
<div class="t c1" style="left:86px;width:106px;top:319.5px">0.0285554</div>
<div class="t c1" style="left:196px;width:106px;top:319.5px">1.5</div>
<div class="t c0" style="left:0;width:82px;top:340.5px">16</div>
<div class="t c1" style="left:86px;width:106px;top:340.5px">0.0170354</div>
<div class="t c1" style="left:196px;width:106px;top:340.5px">1.6</div>
<div class="t c0" style="left:0;width:82px;top:361.5px">17</div>
<div class="t c1" style="left:86px;width:106px;top:361.5px">0.00986869</div>
<div class="t c1" style="left:196px;width:106px;top:361.5px">1.7</div>
<div class="t c0" style="left:0;width:82px;top:382.5px">18</div>
<div class="t c1" style="left:86px;width:106px;top:382.5px">0.00558896</div>
<div class="t c1" style="left:196px;width:106px;top:382.5px">1.8</div>
<div class="t c0" style="left:0;width:82px;top:403.5px">19</div>
<div class="t c1" style="left:86px;width:106px;top:403.5px">0.00311074</div>
<div class="t c1" style="left:196px;width:106px;top:403.5px">1.9</div>
<div class="t c0" style="left:0;width:82px;top:424.5px">20</div>
<div class="t c1" style="left:86px;width:106px;top:424.5px">0.00170874</div>
<div class="t c1" style="left:196px;width:106px;top:424.5px">2</div>
<div class="t c0" style="left:0;width:82px;top:445.5px">21</div>
<div class="t c1" style="left:86px;width:106px;top:445.5px">0.000929434</div>
<div class="t c1" style="left:196px;width:106px;top:445.5px">2.1</div>
<div class="t c0" style="left:0;width:82px;top:466.5px">22</div>
<div class="t c1" style="left:86px;width:106px;top:466.5px">0.000501952</div>
<div class="t c1" style="left:196px;width:106px;top:466.5px">2.2</div>
<div class="t c0" style="left:0;width:82px;top:487.5px">23</div>
<div class="t c1" style="left:86px;width:106px;top:487.5px">0.000269743</div>
<div class="t c1" style="left:196px;width:106px;top:487.5px">2.3</div>
<div class="t c0" style="left:0;width:82px;top:508.5px">24</div>
<div class="t c1" style="left:86px;width:106px;top:508.5px">0.000144496</div>
<div class="t c1" style="left:196px;width:106px;top:508.5px">2.4</div>
<div class="t c0" style="left:0;width:82px;top:529.5px">25</div>
<div class="t c1" style="left:86px;width:106px;top:529.5px">7.72681e-05</div>
<div class="t c1" style="left:196px;width:106px;top:529.5px">2.5</div>
<div class="t c0" style="left:0;width:82px;top:550.5px">26</div>
<div class="t c1" style="left:86px;width:106px;top:550.5px">4.12955e-05</div>
<div class="t c1" style="left:196px;width:106px;top:550.5px">2.6</div>
<div class="t c0" style="left:0;width:82px;top:571.5px">27</div>
<div class="t c1" style="left:86px;width:106px;top:571.5px">2.20792e-05</div>
<div class="t c1" style="left:196px;width:106px;top:571.5px">2.7</div>
<div class="t c0" style="left:0;width:82px;top:592.5px">28</div>
<div class="t c1" style="left:86px;width:106px;top:592.5px">1.18193e-05</div>
<div class="t c1" style="left:196px;width:106px;top:592.5px">2.8</div>
<div class="t c0" style="left:0;width:82px;top:613.5px">29</div>
<div class="t c1" style="left:86px;width:106px;top:613.5px">6.33886e-06</div>
<div class="t c1" style="left:196px;width:106px;top:613.5px">2.9</div>
<div class="t c0" style="left:0;width:82px;top:634.5px">30</div>
<div class="t c1" style="left:86px;width:106px;top:634.5px">3.40784e-06</div>
<div class="t c1" style="left:196px;width:106px;top:634.5px">3</div>
<div class="t c0" style="left:0;width:82px;top:655.5px">31</div>
<div class="t c1" style="left:86px;width:106px;top:655.5px">1.83733e-06</div>
<div class="t c1" style="left:196px;width:106px;top:655.5px">3.1</div>
<div class="t c0" style="left:0;width:82px;top:676.5px">32</div>
<div class="t c1" style="left:86px;width:106px;top:676.5px">9.93791e-07</div>
<div class="t c1" style="left:196px;width:106px;top:676.5px">3.2</div>
<div class="t c0" style="left:0;width:82px;top:697.5px">33</div>
<div class="t c1" style="left:86px;width:106px;top:697.5px">5.39427e-07</div>
<div class="t c1" style="left:196px;width:106px;top:697.5px">3.3</div>
<div class="t c0" style="left:0;width:82px;top:718.5px">34</div>
<div class="t c1" style="left:86px;width:106px;top:718.5px">2.93903e-07</div>
<div class="t c1" style="left:196px;width:106px;top:718.5px">3.4</div>
</div>
<div class="abs" style="left:92px;top:154px;width:112px;height:22px;border:2px solid #a4a4a4"></div>
<div class="abs" style="left:1037px;top:155px;width:15px;height:724px;background:#f0f0f0"></div>
<svg style="left:1037px;top:155px" width="15" height="15"><path d="M3.500 9.500l3.500-3.500 3.500 3.500" stroke="#bdbdbd" stroke-width="1.800" fill="none"/></svg>
<div class="abs" style="left:6px;top:879px;width:1046px;height:15px;background:#f0f0f0"></div>
<svg style="left:6px;top:879px" width="15" height="15"><path d="M9 3.500l-3.500 3.500 3.500 3.500" stroke="#bdbdbd" stroke-width="1.800" fill="none"/></svg>
<div class="abs" style="left:426px;top:437px;width:667px;height:532px;border:1px solid #0a0c10;border-radius:7px 7px 0 0;background:#b9d1ea;overflow:hidden">
<div class="abs" style="left:0;top:0;width:665px;height:26px;background:linear-gradient(#dfeaf6 0,#dfeaf6 1px,#99b4d1 1px,#a6c0de 45%,#b9d1ea 100%)"></div>
<div class="abs" style="left:0;top:26px;width:7px;height:510px;background:linear-gradient(90deg,#f4faff 0,#f4faff 1px,#b9d1ea 1px)"></div>
<div class="abs" style="right:0;top:24px;width:7px;height:530px;background:linear-gradient(90deg,#b9d1ea 55%,#8fdcf8 90%,#80d8f8)"></div>
<div class="abs" style="left:0;bottom:0;width:665px;height:7px;background:linear-gradient(#b9d1ea 60%,#8fe0fa 85%,#5aa8c0)"></div>
</div>
<div class="abs" style="left:434px;top:464px;width:651px;height:497px;background:#fff"></div>
<svg style="left:435px;top:447px" width="16" height="16"><defs><linearGradient id="pk" x1="0" y1="0" x2="0" y2="1"><stop offset="0" stop-color="#d4101c"/><stop offset=".55" stop-color="#e8384a"/><stop offset="1" stop-color="#f6dcec"/></linearGradient></defs><rect x="0" y="0" width="16" height="16" fill="#2b3b5c"/><rect x="1" y="1" width="14" height="14" fill="#e9e6fb"/><path d="M1 12l1-1.500 1 1.800 .8-4.300q.7-1.800 1.400 0l.8 3.500 .6-7.500q.9-2.800 1.800 0l.6 7.500 .8-3.500q.7-1.800 1.400 0l.8 4.300 1-1.800 1 1.500v3h-14z" fill="url(#pk)"/></svg>
<div class="t" id="tt_graph" style="left:455px;top:450px;font-size:12px;letter-spacing:-0.25px">Graph0:igrek vs iks</div>
<div class="abs" style="left:986px;top:443px;width:32px;height:18px;border:1px solid #5f7694;border-radius:3px;background:linear-gradient(#c4d7ee,#b4cbe6 48%,#98b4d6 52%,#b6cde9);box-shadow:inset 0 0 0 1px rgba(255,255,255,.45)"></div>
<div class="abs" style="left:1020px;top:443px;width:32px;height:18px;border:1px solid #5f7694;border-radius:3px;background:linear-gradient(#c4d7ee,#b4cbe6 48%,#98b4d6 52%,#b6cde9);box-shadow:inset 0 0 0 1px rgba(255,255,255,.45)"></div>
<div class="abs" style="left:1054px;top:443px;width:32px;height:18px;border:1px solid #5b2520;border-radius:3px;background:linear-gradient(#e9a99c,#d9796a 48%,#c4402c 52%,#d86a55);box-shadow:inset 0 0 0 1px rgba(255,255,255,.35)"></div>
<svg style="left:986px;top:443px" width="100" height="18"><rect x="10.500" y="8.500" width="10" height="4" rx="1.200" fill="#f0f0f0" stroke="#444e60" stroke-width="1.200"/><rect x="44.500" y="4.500" width="10" height="8" rx="1" fill="#f0f0f0" stroke="#4a5466"/><rect x="47.5" y="7.500" width="4" height="2" fill="#9ab0cc" stroke="#4a5466"/><path transform="translate(83.500 8.500)" d="M-5.200 -3.800L-1.700 -3.800L0 -1.900L1.700 -3.800L5.200 -3.800L1.900 0L5.200 3.800L1.700 3.800L0 1.900L-1.700 3.800L-5.200 3.800L-1.900 0Z" fill="#fbfbfb" stroke="#5a2f2c" stroke-width="1.100" stroke-linejoin="round"/></svg>
<svg style="left:0;top:0" width="1245" height="1406">
<g stroke="#000" stroke-width="1.150" fill="none">
<path d="M520.700 482V903.400"/>
<path d="M520 903.400H1048.800"/>
<path d="M509.500 902.50H520.700"/>
<path d="M509.500 850.75H520.700"/>
<path d="M509.500 799.00H520.700"/>
<path d="M509.500 747.25H520.700"/>
<path d="M509.500 695.50H520.700"/>
<path d="M509.500 643.75H520.700"/>
<path d="M509.500 592.00H520.700"/>
<path d="M509.500 540.25H520.700"/>
<path d="M509.500 488.50H520.700"/>
<path d="M522.40 903.400V915"/>
<path d="M628.60 903.400V915"/>
<path d="M734.80 903.400V915"/>
<path d="M841.00 903.400V915"/>
<path d="M947.20 903.400V915"/>
</g>
<path d="M527.71 902.50L533.02 902.50L538.33 902.49L543.64 901.25L548.95 884.81L554.26 817.17L559.57 689.32L564.88 555.95L570.19 482.70L575.50 489.59L580.81 553.44L586.12 638.76L591.43 719.37L596.74 783.27L602.05 828.61L607.36 858.42L612.67 876.96L617.98 888.04L623.29 894.45L628.60 898.08L633.91 900.10L639.22 901.20L644.53 901.80L649.84 902.13L655.15 902.30L660.46 902.39L665.77 902.44L671.08 902.47L676.39 902.48L681.70 902.49L687.01 902.50L692.32 902.50L697.63 902.50L702.94 902.50L708.25 902.50L713.56 902.50L718.87 902.50L724.18 902.50L729.49 902.50L734.80 902.50L740.11 902.50L745.42 902.50L750.73 902.50L756.04 902.50L761.35 902.50L766.66 902.50L771.97 902.50L777.28 902.50L782.59 902.50L787.90 902.50L793.21 902.50L798.52 902.50L803.83 902.50L809.14 902.50L814.45 902.50L819.76 902.50L825.07 902.50L830.38 902.50L835.69 902.50L841.00 902.50L846.31 902.50L851.62 902.50L856.93 902.50L862.24 902.50L867.55 902.50L872.86 902.50L878.17 902.50L883.48 902.50L888.79 902.50L894.10 902.50L899.41 902.50L904.72 902.50L910.03 902.50L915.34 902.50L920.65 902.50L925.96 902.50L931.27 902.50L936.58 902.50L941.89 902.50L947.20 902.50L952.51 902.50L957.82 902.50L963.13 902.50L968.44 902.50L973.75 902.50L979.06 902.50L984.37 902.50L989.68 902.50L994.99 902.50L1000.30 902.50L1005.61 902.50L1010.92 902.50L1016.23 902.50L1021.54 902.50L1026.85 902.50L1032.16 902.50L1037.47 902.50L1042.78 902.50L1048.09 902.50" stroke="#ff4a4a" stroke-opacity=".55" stroke-width="1.250" fill="none" stroke-linejoin="round"/>
<path d="M527.71 902.50L533.02 902.50L538.33 902.49L543.64 901.25L548.95 884.81L554.26 817.17L559.57 689.32L564.88 555.95L570.19 482.70L575.50 489.59L580.81 553.44L586.12 638.76L591.43 719.37L596.74 783.27L602.05 828.61L607.36 858.42L612.67 876.96L617.98 888.04L623.29 894.45L628.60 898.08L633.91 900.10L639.22 901.20L644.53 901.80L649.84 902.13L655.15 902.30L660.46 902.39L665.77 902.44L671.08 902.47L676.39 902.48L681.70 902.49L687.01 902.50L692.32 902.50L697.63 902.50L702.94 902.50L708.25 902.50L713.56 902.50L718.87 902.50L724.18 902.50L729.49 902.50L734.80 902.50L740.11 902.50L745.42 902.50L750.73 902.50L756.04 902.50L761.35 902.50L766.66 902.50L771.97 902.50L777.28 902.50L782.59 902.50L787.90 902.50L793.21 902.50L798.52 902.50L803.83 902.50L809.14 902.50L814.45 902.50L819.76 902.50L825.07 902.50L830.38 902.50L835.69 902.50L841.00 902.50L846.31 902.50L851.62 902.50L856.93 902.50L862.24 902.50L867.55 902.50L872.86 902.50L878.17 902.50L883.48 902.50L888.79 902.50L894.10 902.50L899.41 902.50L904.72 902.50L910.03 902.50L915.34 902.50L920.65 902.50L925.96 902.50L931.27 902.50L936.58 902.50L941.89 902.50L947.20 902.50L952.51 902.50L957.82 902.50L963.13 902.50L968.44 902.50L973.75 902.50L979.06 902.50L984.37 902.50L989.68 902.50L994.99 902.50L1000.30 902.50L1005.61 902.50L1010.92 902.50L1016.23 902.50L1021.54 902.50L1026.85 902.50L1032.16 902.50L1037.47 902.50L1042.78 902.50L1048.09 902.50" stroke="#7e141c" stroke-opacity=".95" stroke-width="0.550" fill="none" stroke-linejoin="round"/>
<g stroke="#7a1216" stroke-width="1" fill="none"><circle cx="575.50" cy="489.59" r="8"/><path d="M567.50 489.59h16M575.50 481.59v16"/></g>
</svg>
<div class="t yl" style="left:439.800px;width:64px;text-align:right;top:894.9px;font-size:16px;letter-spacing:-0.2px">0.00</div>
<div class="t yl" style="left:439.800px;width:64px;text-align:right;top:843.1px;font-size:16px;letter-spacing:-0.2px">0.02</div>
<div class="t yl" style="left:439.800px;width:64px;text-align:right;top:791.4px;font-size:16px;letter-spacing:-0.2px">0.04</div>
<div class="t yl" style="left:439.800px;width:64px;text-align:right;top:739.6px;font-size:16px;letter-spacing:-0.2px">0.06</div>
<div class="t yl" style="left:439.800px;width:64px;text-align:right;top:687.9px;font-size:16px;letter-spacing:-0.2px">0.08</div>
<div class="t yl" style="left:439.800px;width:64px;text-align:right;top:636.1px;font-size:16px;letter-spacing:-0.2px">0.10</div>
<div class="t yl" style="left:439.800px;width:64px;text-align:right;top:584.4px;font-size:16px;letter-spacing:-0.2px">0.12</div>
<div class="t yl" style="left:439.800px;width:64px;text-align:right;top:532.6px;font-size:16px;letter-spacing:-0.2px">0.14</div>
<div class="t yl" style="left:439.800px;width:64px;text-align:right;top:480.9px;font-size:16px;letter-spacing:-0.2px">0.16</div>
<div class="t xl" style="left:502.4px;width:40px;text-align:center;top:922.500px;font-size:16px">0</div>
<div class="t xl" style="left:608.6px;width:40px;text-align:center;top:922.500px;font-size:16px">2</div>
<div class="t xl" style="left:714.8px;width:40px;text-align:center;top:922.500px;font-size:16px">4</div>
<div class="t xl" style="left:821.0px;width:40px;text-align:center;top:922.500px;font-size:16px">6</div>
<div class="t xl" style="left:927.2px;width:40px;text-align:center;top:922.500px;font-size:16px">8</div>
<div class="abs" style="left:426px;top:969px;width:590px;height:46px;background:#f0f0f0"></div>
<div class="abs" style="left:426px;top:969px;width:27px;height:47px;background:#f0f0f0;border-right:1px solid #f8f8f8"></div>
<div class="abs" style="left:426px;top:982px;width:26px;height:20px;border:1px solid #fafafa;border-right-color:#c8c8c8;border-bottom-color:#c8c8c8;background:#efefef"></div>
<svg style="left:431px;top:985px" width="15" height="15"><defs><linearGradient id="gg431_985" x1="0" y1="0" x2="1" y2="1"><stop offset="0" stop-color="#f4f6f9"/><stop offset="1" stop-color="#c6ccd6"/></linearGradient></defs><path d="M12.78 6.36L14.54 6.55L14.54 8.45L12.78 8.64L12.03 10.43L13.14 11.81L11.81 13.14L10.43 12.03L8.64 12.78L8.45 14.54L6.55 14.54L6.36 12.78L4.57 12.03L3.19 13.14L1.86 11.81L2.97 10.43L2.22 8.64L0.46 8.45L0.46 6.55L2.22 6.36L2.97 4.57L1.86 3.19L3.19 1.86L4.57 2.97L6.36 2.22L6.55 0.46L8.45 0.46L8.64 2.22L10.43 2.97L11.81 1.86L13.14 3.19L12.03 4.57Z" fill="url(#gg431_985)" stroke="#7d8593" stroke-width="1.100" stroke-linejoin="round"/><circle cx="7.5" cy="7.5" r="1.80" fill="#fff" stroke="#7d8593" stroke-width="1.300"/></svg>
<svg style="left:457px;top:972px" width="16" height="16"><rect width="16" height="16" fill="#000"/><circle cx="8" cy="8" r="5.500" fill="none" stroke="#fff" stroke-width="1.200"/><path d="M2.500 8h11M8 2.500v11" stroke="#fff" stroke-width="1.200"/></svg>
<svg style="left:457px;top:995px" width="16" height="16"><rect x="0" y="0" width="16" height="16" fill="#fff"/><rect x="2.800" y="2.800" width="11.400" height="11.400" rx="1" fill="#fff" stroke="#000" stroke-width="1.700"/><path d="M3.500 3.500l10 10M13.500 3.500l-10 10" stroke="#000" stroke-width="1"/></svg>
<div class="t ip" id="ip_a" style="left:477px;top:976px">A:</div>
<div class="t ip" id="ip_b" style="left:478px;top:998px">B:</div>
<div class="t ip" id="ip_igrek" style="left:501px;top:974px;font-size:13px;letter-spacing:-0.2px">igrek</div>
<div class="abs" style="left:530px;top:971px;width:41px;height:41px;border:1px solid #fdfdfd;border-top-color:#d8d8d8;border-left-color:#d8d8d8;background:linear-gradient(#8c8c8c,#a8a8a8 20%,#fdfdfd 50%,#a8a8a8 80%,#8c8c8c)"></div>
<div class="abs" style="left:547px;top:984px;width:7px;height:14px;border-radius:3.500px;background:linear-gradient(90deg,#4a5cf0,#1a22e0 50%,#2a38e8)"></div>
<div class="t ip" id="ip_apnt" style="left:540px;width:70.500px;text-align:right;top:976px;letter-spacing:0.5px">A pnt:</div>
<div class="t ip" id="ip_pnt" style="left:540px;width:70.700px;text-align:right;top:998px;letter-spacing:0.7px">pnt:</div>
<div class="abs" style="left:611px;top:970px;width:111px;height:22px;border:1px solid #7a7a7a;background:#fff"></div>
<div class="abs" style="left:611px;top:992px;width:111px;height:22px;border:1px solid #7a7a7a;background:#fff"></div>
<div class="t ip" id="ip_10" style="left:615px;top:976px">10</div>
<div class="t ip" id="ip_x1" style="left:723px;top:976px;letter-spacing:0px">X: 1</div>
<div class="t ip" id="ip_x2" style="left:723px;top:998px">X:</div>
<div class="t ip" id="ip_y1" style="left:818px;top:976px;letter-spacing:0.22px">Y: 0.15958</div>
<div class="t ip" id="ip_y2" style="left:818px;top:998px">Y:</div>
<div class="abs" style="left:911px;top:969px;width:1px;height:46px;background:#a0a0a0"></div>
<div class="t ip" id="ip_dy" style="left:914px;top:976px;letter-spacing:0.1px">&#916;Y:</div>
<div class="t ip" id="ip_dx" style="left:914px;top:998px;letter-spacing:0.1px">&#916;X:</div>
<div class="abs" style="left:1px;top:1110px;width:1300px;height:320px;border:1px solid #55585e;border-radius:7px 7px 0 0;background:#d3e0ee;overflow:hidden">
<div class="abs" style="left:0;top:0;width:1300px;height:26px;background:linear-gradient(#e4eaf4 0,#e4eaf4 1px,#bfcddb 1px,#d6e2f0 100%)"></div>
<div class="abs" style="left:0;top:26px;width:7px;height:300px;background:linear-gradient(90deg,#dde7f3,#d0ddec)"></div>
</div>
<svg style="left:10px;top:1120px" width="16" height="16" shape-rendering="crispEdges"><rect width="16" height="16" fill="#3b4058"/><rect x="1" y="1" width="14" height="9" fill="#c9c7f6"/><rect x="3" y="3" width="10" height="1" fill="#3b4058"/><rect x="3" y="5" width="10" height="1" fill="#3b4058"/><rect x="3" y="7" width="10" height="1" fill="#3b4058"/><rect x="1" y="10" width="14" height="1" fill="#d8141c"/><rect x="1" y="11" width="14" height="4" fill="#fff"/><rect x="2" y="12" width="1" height="2" fill="#3b4058"/></svg>
<div class="t" id="tt_cmd" style="left:30.600px;top:1123px;font-size:12px;letter-spacing:0.1px">Untitled</div>
<div class="abs" style="left:9px;top:1137px;width:1240px;height:5px;background:#f0f0f0"></div>
<div class="abs" style="left:9px;top:1142px;width:1240px;height:225px;background:#fff"></div>
<div class="abs" style="left:9px;top:1142px;width:21px;height:225px;background:#e8e8e8"></div>
<div class="t mono ln" style="left:0;width:30px;text-align:right;top:1147px;color:#b4b4b4">0</div>
<div class="t mono cl" id="cl0" style="left:34px;top:1147px;letter-spacing:0.02px">&#8226;<span style="color:#0b7a7c">Edit</span></div>
<div class="t mono ln" style="left:0;width:30px;text-align:right;top:1162px;color:#b4b4b4">1</div>
<div class="t mono cl" id="cl1" style="left:34px;top:1162px;letter-spacing:0.02px">&#8226;<span style="color:#0b7a7c">Make</span>/N=100/D iks,igrek</div>
<div class="t mono ln" style="left:0;width:30px;text-align:right;top:1177px;color:#b4b4b4">2</div>
<div class="t mono cl" id="cl2" style="left:34px;top:1177px;letter-spacing:0.02px">&#8226;iks =x</div>
<div class="t mono ln" style="left:0;width:30px;text-align:right;top:1192px;color:#b4b4b4">3</div>
<div class="t mono cl" id="cl3" style="left:34px;top:1192px;letter-spacing:0.02px">&#8226;<span style="color:#0b7a7c">AppendToTable</span> igrek,iks</div>
<div class="t mono ln" style="left:0;width:30px;text-align:right;top:1207px;color:#b4b4b4">4</div>
<div class="t mono cl" id="cl4" style="left:34px;top:1207px;letter-spacing:0.02px">&#8226;igrek = (1/(4*x*(2*<span style="color:#c4600a">PI</span>)^0.5))*<span style="color:#c4600a">EXP</span>(-((<span style="color:#c4600a">LN</span>(iks)-0)^2)/(2*(1)^2))</div>
<div class="t mono ln" style="left:0;width:30px;text-align:right;top:1222px;color:#b4b4b4">5</div>
<div class="t mono cl" id="cl5" style="left:34px;top:1222px;letter-spacing:0.02px">&#8226;iks = x/10</div>
<div class="t mono ln" style="left:0;width:30px;text-align:right;top:1237px;color:#b4b4b4">6</div>
<div class="t mono cl" id="cl6" style="left:34px;top:1237px;letter-spacing:0.02px">&#8226;igrek = (1/(4*x*(2*<span style="color:#c4600a">PI</span>)^0.5))*<span style="color:#c4600a">EXP</span>(-((<span style="color:#c4600a">LN</span>(iks)-0)^2)/(2*(1)^2))</div>
<div class="t mono ln" style="left:0;width:30px;text-align:right;top:1252px;color:#b4b4b4">7</div>
<div class="t mono cl" id="cl7" style="left:34px;top:1252px;letter-spacing:0.02px">&#8226;<span style="color:#0b7a7c">Display</span> igrek vs iks</div>
<div class="t mono ln" style="left:0;width:30px;text-align:right;top:1267px;color:#b4b4b4">8</div>
<div class="t mono cl" id="cl8" style="left:34px;top:1267px;letter-spacing:0.02px">&#8226;<span style="color:#0b7a7c">ShowInfo</span></div>
<div class="t mono ln" style="left:0;width:30px;text-align:right;top:1282px;color:#b4b4b4">9</div>
<div class="t mono cl" id="cl9" style="left:34px;top:1282px;letter-spacing:0.02px">&#8226;igrek = (1/(4*x*(2*<span style="color:#c4600a">PI</span>)^0.5))*<span style="color:#c4600a">EXP</span>(-((<span style="color:#c4600a">LN</span>(iks)-0)^2)/(2*(0.25)^2))</div>
<div class="t mono ln" style="left:0;width:30px;text-align:right;top:1297px;color:#b4b4b4">10</div>
<div class="t mono cl" id="cl10" style="left:34px;top:1297px;letter-spacing:0.02px">&#8226;igrek = (1/(0.25*x*(2*<span style="color:#c4600a">PI</span>)^0.5))*<span style="color:#c4600a">EXP</span>(-((<span style="color:#c4600a">LN</span>(iks)-0)^2)/(2*(0.25)^2))</div>
<div class="t mono ln" style="left:0;width:30px;text-align:right;top:1312px;color:#555">11</div>
<div class="abs" style="left:9px;top:1367px;width:1240px;height:9px;border:1px solid #000;background:#fff"></div>
<div class="abs" style="left:10px;top:1369.500px;width:1240px;height:4px;background:#e10a0a"></div>
<div class="abs" style="left:9px;top:1376px;width:1240px;height:25px;background:#fff"></div>
<div class="abs" style="left:13px;top:1380px;width:1px;height:15px;background:#000"></div>
</body></html>
